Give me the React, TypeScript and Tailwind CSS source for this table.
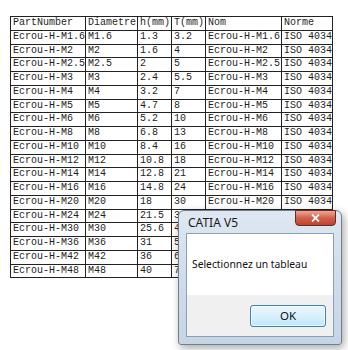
import type React from "react";

type Row = [string, string, string, string, string, string];

const header: Row = ["PartNumber", "Diametre", "h(mm)", "T(mm)", "Nom", "Norme"];

const rows: Row[] = [
  ["Ecrou-H-M1.6", "M1.6", "1.3", "3.2", "Ecrou-H-M1.6", "ISO 4034"],
  ["Ecrou-H-M2", "M2", "1.6", "4", "Ecrou-H-M2", "ISO 4034"],
  ["Ecrou-H-M2.5", "M2.5", "2", "5", "Ecrou-H-M2.5", "ISO 4034"],
  ["Ecrou-H-M3", "M3", "2.4", "5.5", "Ecrou-H-M3", "ISO 4034"],
  ["Ecrou-H-M4", "M4", "3.2", "7", "Ecrou-H-M4", "ISO 4034"],
  ["Ecrou-H-M5", "M5", "4.7", "8", "Ecrou-H-M5", "ISO 4034"],
  ["Ecrou-H-M6", "M6", "5.2", "10", "Ecrou-H-M6", "ISO 4034"],
  ["Ecrou-H-M8", "M8", "6.8", "13", "Ecrou-H-M8", "ISO 4034"],
  ["Ecrou-H-M10", "M10", "8.4", "16", "Ecrou-H-M10", "ISO 4034"],
  ["Ecrou-H-M12", "M12", "10.8", "18", "Ecrou-H-M12", "ISO 4034"],
  ["Ecrou-H-M14", "M14", "12.8", "21", "Ecrou-H-M14", "ISO 4034"],
  ["Ecrou-H-M16", "M16", "14.8", "24", "Ecrou-H-M16", "ISO 4034"],
  ["Ecrou-H-M20", "M20", "18", "30", "Ecrou-H-M20", "ISO 4034"],
  ["Ecrou-H-M24", "M24", "21.5", "36", "Ecrou-H-M24", "ISO 4034"],
  ["Ecrou-H-M30", "M30", "25.6", "46", "Ecrou-H-M30", "ISO 4034"],
  ["Ecrou-H-M36", "M36", "31", "55", "Ecrou-H-M36", "ISO 4034"],
  ["Ecrou-H-M42", "M42", "36", "65", "Ecrou-H-M42", "ISO 4034"],
  ["Ecrou-H-M48", "M48", "40", "75", "Ecrou-H-M48", "ISO 4034"],
];

const widths = ["w-[74px]", "w-[52px]", "w-[34px]", "w-[34px]", "w-[76px]", "w-[50px]"];

const Cell: React.FC<{ text: string; i: number }> = ({ text, i }) => (
  <td
    className={
      "border border-[#222] p-0 pl-[2px] leading-[12.75px] whitespace-pre overflow-hidden " + widths[i]
    }
  >
    {text}
  </td>
);

// Windows 7 style message box
const MessageBox: React.FC = () => (
  <div className="absolute left-[178px] top-[210px] w-[164px] h-[135px] rounded-t-[6px] rounded-b-[3px] border border-[#6f7f91] bg-gradient-to-b from-[#dfe8f2] via-[#cfdcea] to-[#c6d5e6] shadow-[2px_3px_8px_rgba(0,0,0,0.35)] px-[7px] pb-[7px] flex flex-col">
    <div className="h-[22px] flex items-center text-[12px] text-[#1a1a1a] pl-[2px] pt-[2px] font-['Noto_Sans','Open_Sans',sans-serif]">
      CATIA V5
    </div>
    <div className="absolute right-[5px] top-[-1px] w-[41px] h-[16px] rounded-b-[4px] border border-[#6b2a1f] bg-gradient-to-b from-[#e9a897] via-[#d2604a] to-[#c0432c] flex items-center justify-center">
      <svg viewBox="0 0 10 10" className="w-[9px] h-[8px]" fill="none" stroke="#ffffff" strokeWidth={2.2}>
        <path d="M1.5 1.5l7 7M8.5 1.5l-7 7" strokeLinecap="square" />
      </svg>
    </div>
    <div className="flex-1 flex flex-col border border-[#8e9fb3] bg-white">
      <div className="h-[61px] flex items-center pl-[5px] text-[10.3px] text-[#111] font-['Noto_Sans','Open_Sans',sans-serif]">
        Selectionnez un tableau
      </div>
      <div className="flex-1 bg-[#f0f0f0] flex items-center justify-end pr-[7px]">
        <button className="w-[76px] h-[22px] rounded-[3px] border border-[#3c7fb1] bg-gradient-to-b from-[#eaf6fd] via-[#d9f0fc] to-[#bee6fd] text-[11.5px] text-[#111] shadow-[inset_0_0_0_1px_rgba(255,255,255,0.7)] font-['Noto_Sans','Open_Sans',sans-serif]">
          OK
        </button>
      </div>
    </div>
  </div>
);

const App: React.FC = () => {
  return (
    <div className="relative w-[348px] h-[350px] bg-white overflow-hidden">
      <div className="pt-[16px] pl-[10px]">
        <table className="border-collapse table-fixed text-[10px] text-[#1e1e1e] font-['Liberation_Mono',monospace]">
          <tbody>
            <tr>
              {header.map((h, i) => (
                <Cell key={h} text={h} i={i} />
              ))}
            </tr>
            {rows.map((r) => (
              <tr key={r[0]}>
                {r.map((c, i) => (
                  <Cell key={i} text={c} i={i} />
                ))}
              </tr>
            ))}
          </tbody>
        </table>
      </div>
      <MessageBox />
    </div>
  );
};

export default App;
